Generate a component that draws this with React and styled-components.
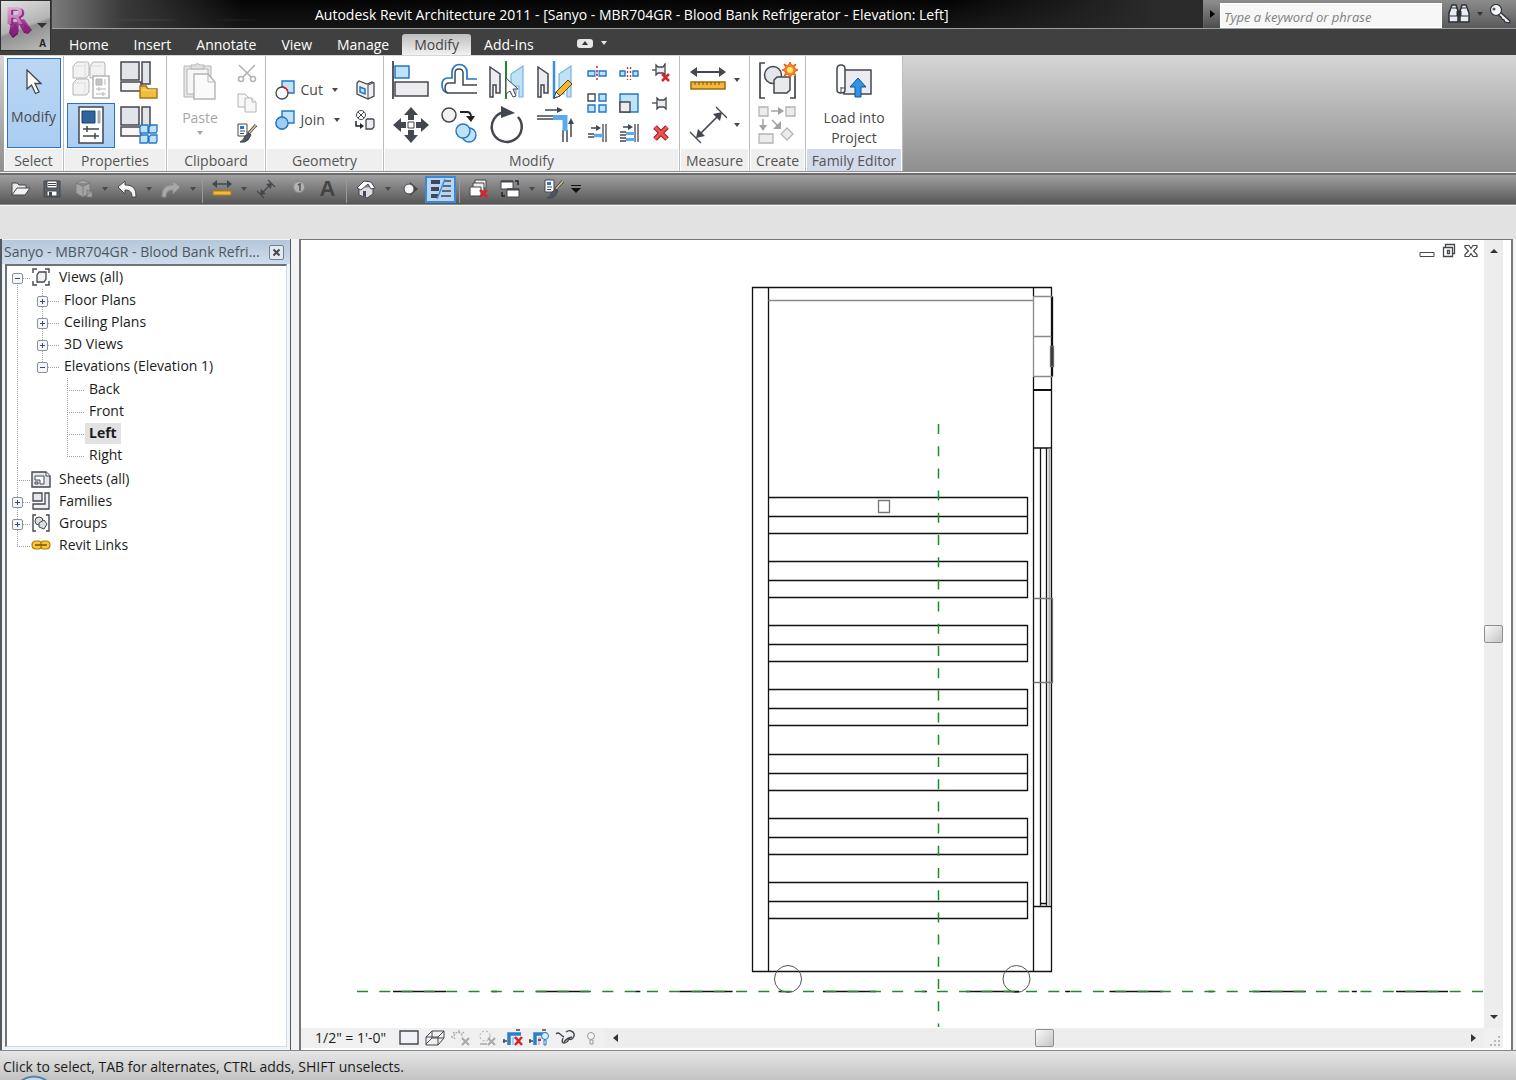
import React, { useState } from 'react';
import styled, { createGlobalStyle, css } from 'styled-components';

const INK = '#43474f';
const BLUE = '#2277c8';
const PALE = '#bfe2f7';
const DIM = '#b4b4b4';
const GREEN = '#1f8a2b';

const GlobalStyle = createGlobalStyle`
    * { box-sizing: border-box; }
    body {
        margin: 0;
        font-family: "Open Sans", "Noto Sans", sans-serif;
        font-size: 14px;
        line-height: 20px;
        color: #1c1c1c;
    }
    button, input { font: inherit; color: inherit; }
    button { background: none; border: 0; padding: 0; }
    ul { list-style: none; margin: 0; padding: 0; }
    svg { display: block; flex: none; }
`;

/* ---------- icons ---------- */

const Glyph = ({ w = 20, h = w, children, ...rest }) => (
    <svg width={w} height={h} viewBox={`0 0 ${w} ${h}`} fill="none" stroke={INK} aria-hidden="true" {...rest}>
        {children}
    </svg>
);

const Caret = ({ color = '#4a4a4a', w = 6 }) => (
    <Glyph w={w} h={4} stroke="none"><path d={`M0 0h${w}L${w / 2} 4z`} fill={color} /></Glyph>
);

const LogoIcon = () => (
    <svg width="49" height="49" viewBox="0 0 49 49" aria-hidden="true">
        <defs>
            <linearGradient id="logoFace" x1="0" y1="0" x2="0" y2="1">
                <stop offset="0" stopColor="#e9c3e2" />
                <stop offset="1" stopColor="#b455a6" />
            </linearGradient>
            <linearGradient id="logoLeg" x1="0" y1="0" x2="0" y2="1">
                <stop offset="0" stopColor="#b845a6" />
                <stop offset="1" stopColor="#5e1056" />
            </linearGradient>
        </defs>
        <path d="M10 21h8l-1 12-5 4-4-5zM16 20l7-2 8 11-4 4-4-1z" fill="url(#logoLeg)" />
        <path d="M14 22l4 8-8 6zM22 21l8 8-4 3z" fill="#8a2380" />
        <text x="7" y="24" fontFamily="Liberation Sans, sans-serif" fontWeight="700" fontSize="24" fill="#8b2a7e">R</text>
        <text x="5" y="23" fontFamily="Liberation Sans, sans-serif" fontWeight="700" fontSize="24" fill="url(#logoFace)">R</text>
        <path d="M36 22h10l-5 5z" fill="#333" />
        <text x="38" y="46" fontFamily="Liberation Sans, sans-serif" fontWeight="700" fontSize="10" fill="#222">A</text>
    </svg>
);

const CursorIcon = () => (
    <Glyph w={16} h={26}>
        <path d="M1 1v19l4.500-4 4 8.500 3.500-1.500-4-8.500H15z" fill="#fff" strokeWidth="1.300" />
    </Glyph>
);

const TypePropertiesIcon = () => (
    <Glyph w={38} stroke={DIM} fill="#f2f2f2">
        <path d="M5 1h11l1 3v10l-3 3H1V5zM21 1h11l1 3v10l-3 3H18V5zM5 18h11l1 3v10l-3 3H1V22z" />
        <path d="M1 5h12l3-4M13 5v12M18 5h12M1 22h12v12" stroke="#dcdcdc" />
        <path d="M21 15h16v22H21z" fill="#fff" strokeWidth="1.500" />
        <path d="M24 18h6v6h-6z" fill="#c4c4c4" />
        <path d="M33 18v6M24 28h10M24 33h10M27 26v4M31 31v4" />
    </Glyph>
);

const FamilyFrame = () => (
    <g strokeWidth="1.500">
        <path d="M1 1h18v18H1z" fill="#e3e3ea" />
        <path d="M1 21h20v9H1z" fill="#f6f6f6" />
        <path d="M22 1h8v22h-8z" fill="#e3e3ea" />
    </g>
);

const CategoryIcon = () => (
    <Glyph w={38}>
        <FamilyFrame />
        <path d="M20 37V25h6l2 3h9v9z" fill="#f5bd3f" stroke="#a8730c" strokeWidth="1.400" />
        <path d="M22 29h14" stroke="#fde29a" />
    </Glyph>
);

const TypesIcon = () => (
    <Glyph w={38}>
        <FamilyFrame />
        <path d="M21 19h7v8h-8v-6zM31 19h6v6l-1 2h-7v-6zM21 29h7v6l-1 2h-7v-6zM31 29h6v6l-1 2h-7v-6z" fill={PALE} stroke={BLUE} strokeWidth="1.300" />
    </Glyph>
);

const PropertiesIcon = () => (
    <Glyph w={26} h={38}>
        <path d="M1 1h24v36H1z" fill="#fff" strokeWidth="1.500" />
        <path d="M4 5h13v12H4z" fill="#2f649c" stroke="#17406e" />
        <path d="M20 5h2v12h-2z" fill="#b8bcc4" stroke="#9aa0aa" />
        <path d="M5 23h16M9 20v6M5 30h16M17 27v6" strokeWidth="1.500" />
    </Glyph>
);

const PasteIcon = () => (
    <Glyph w={34} h={38} stroke={DIM}>
        <path d="M1 4h27v31H1z" fill="#e6e6e6" />
        <path d="M4 7h21v25H4z" fill="#f6f6f6" />
        <path d="M8 3h4q2-3 5 0h4v4H8z" fill="#e0e0e0" />
        <path d="M11 12h14l7 8v17H11z" fill="#fafafa" strokeWidth="1.400" />
        <path d="M25 12v8h7" />
    </Glyph>
);

const ScissorsIcon = () => (
    <Glyph stroke={DIM} strokeWidth="1.600">
        <path d="M2 2l12 12M18 2L6 14" />
        <circle cx="4" cy="16" r="2.500" /><circle cx="16" cy="16" r="2.500" />
    </Glyph>
);

const CopyClipIcon = () => (
    <Glyph h={22} stroke={DIM} fill="#f7f7f7">
        <path d="M1 2h7l4 4v9H1z" /><path d="M8 6h7l4 4v10H8z" /><path d="M15 6v4h4" />
    </Glyph>
);

const MatchIcon = () => (
    <Glyph>
        <path d="M1 1h9v12H1z" fill="#fff" /><path d="M3 3h4v3H3z" fill={BLUE} stroke="none" />
        <path d="M3 8h5M3 10.500h4" />
        <path d="M19 2l-8 9" strokeWidth="3" /><path d="M19 2l-7 8" stroke="#d9c08a" strokeWidth="1.500" />
        <path d="M12 10l2 2-3 5q-3 3-8 2 4-2 5-6z" fill="#4d5560" />
    </Glyph>
);

const CutGeoIcon = () => (
    <Glyph w={22}>
        <path d="M8 2h12v12H8z" fill={PALE} stroke={BLUE} strokeWidth="1.400" />
        <circle cx="8" cy="14" r="6" fill="#fff" strokeWidth="1.300" />
        <path d="M8 8a6 6 0 0 1 6 6" stroke="#e02020" strokeWidth="1.500" />
    </Glyph>
);

const JoinGeoIcon = () => (
    <Glyph w={22} stroke={BLUE}>
        <path d="M8 14V2h12v12h-6a6 6 0 1 1-6-6" fill={PALE} strokeWidth="1.400" />
        <circle cx="8" cy="14" r="6" fill="#9fcdf0" strokeWidth="1.300" />
    </Glyph>
);

const WallFaceIcon = () => (
    <Glyph>
        <path d="M2 3l2-2 8 3 5-2 2 1v13l-6 3L2 14z" fill="#f0f0f3" strokeWidth="1.300" />
        <path d="M13 5v14M13 5l5-2" /><path d="M5 7l5 2v5l-5-2z" fill={PALE} stroke={BLUE} strokeWidth="1.500" />
    </Glyph>
);

const PaintIcon = () => (
    <Glyph>
        <circle cx="6" cy="5" r="4.500" fill="#fff" /><path d="M3 2l6 6M9 2L3 8" />
        <path d="M1 11v5h5" stroke="#222" strokeWidth="1.500" /><path d="M5 13l4 3-4 3z" fill="#222" stroke="none" />
        <path d="M12 9h6l1 1v7l-2 2h-6v-9z" fill="#ececf0" strokeWidth="1.300" />
    </Glyph>
);

const AlignIcon = () => (
    <Glyph w={38}>
        <path d="M1 0v38" stroke="#222" strokeWidth="1.500" />
        <path d="M3 5h14v12H3z" fill={PALE} stroke={BLUE} strokeWidth="1.500" />
        <path d="M3 21h33v14H3z" fill="#ececf0" strokeWidth="1.500" />
    </Glyph>
);

const OffsetIcon = () => (
    <Glyph w={38}>
        <path d="M37 18H27V11a7 7 0 0 0-15 0v6H8q-6 0-6 7t6 8" stroke={BLUE} strokeWidth="1.700" />
        <path d="M37 24H23V12q0-4-4-4t-4 4v10H9q-4 0-4 5t4 5h28" strokeWidth="1.500" />
    </Glyph>
);

const MirrorPickIcon = () => (
    <Glyph w={38}>
        <path d="M2 6l10 7v19H8V24H5v12H2z" fill="#ececf0" strokeWidth="1.500" />
        <path d="M35 5L23 13v20h5V25h3v11h4z" fill={PALE} stroke="#79b3dc" strokeWidth="1.200" />
        <path d="M18 0v38" stroke={GREEN} strokeWidth="2" />
        <path d="M18 17v16l4-3 3 6 3-1-3-7h5z" fill="#fff" />
    </Glyph>
);

const MirrorDrawIcon = () => (
    <Glyph w={38}>
        <path d="M2 6l10 7v19H8V24H5v12H2z" fill="#ececf0" strokeWidth="1.500" />
        <path d="M35 5L23 13v20h5V25h3v11h4z" fill={PALE} stroke="#79b3dc" strokeWidth="1.200" />
        <path d="M18 0v38" stroke="#3e8ede" strokeWidth="2.500" />
        <path d="M32 19l4 4-12 12-6 2 2-6z" fill="#f6b62e" stroke="#54431b" />
        <path d="M20 31l4 4-6 2z" fill="#fff" />
    </Glyph>
);

const MoveIcon = () => (
    <Glyph w={38}>
        <path d="M19 1l7 8h-4v5h-6V9h-4zM19 37l7-8h-4v-5h-6v5h-4zM1 19l8-7v4h5v6H9v4zM37 19l-8-7v4h-5v6h5v4z" fill={INK} stroke="none" />
        <path d="M16 16h6v6h-6z" fill="#fff" />
    </Glyph>
);

const CopyIcon = () => (
    <Glyph w={38}>
        <circle cx="9" cy="9" r="7" fill="#f2f2f2" strokeWidth="1.500" />
        <path d="M20 6h7q4 0 4 5" stroke="#222" strokeWidth="1.800" /><path d="M26 10h9l-4 6z" fill="#222" stroke="none" />
        <circle cx="29" cy="29" r="7" fill={PALE} stroke={BLUE} strokeWidth="1.400" />
        <circle cx="23" cy="25" r="7" fill={PALE} stroke={BLUE} strokeWidth="1.400" />
    </Glyph>
);

const RotateIcon = () => (
    <Glyph w={38}>
        <path d="M30 11a15 15 0 1 1-13-5" strokeWidth="2.500" />
        <path d="M13 0l14 7-14 5z" fill={INK} stroke="none" />
    </Glyph>
);

const TrimIcon = () => (
    <Glyph w={38}>
        <path d="M1 10h17M1 13h17M27 24v12M31 24v12" strokeWidth="1.500" />
        <path d="M17 11.500h12V25" stroke="#5aaaf0" strokeWidth="5" />
        <path d="M9 4h14M35 31V16" strokeWidth="1.500" />
        <path d="M21 1l6 3-6 3zM32 18l3-6 3 6z" fill={INK} stroke="none" />
    </Glyph>
);

const SplitIcon = () => (
    <Glyph>
        <path d="M1 8h7v5H1zM12 8h7v5h-7z" fill={PALE} stroke={BLUE} strokeWidth="1.400" />
        <path d="M8 8h4v5H8z" fill="#9fd1f5" stroke="none" />
        <path d="M10 3v15" stroke="#d12a2a" strokeWidth="1.500" strokeDasharray="2 2" />
    </Glyph>
);

const SplitGapIcon = () => (
    <Glyph>
        <path d="M1 8h5v5H1zM14 8h5v5h-5z" fill={PALE} stroke={BLUE} strokeWidth="1.400" />
        <path d="M8.500 4v13M11.500 4v13" stroke="#d12a2a" strokeWidth="1.300" strokeDasharray="2 2" />
    </Glyph>
);

const UnpinIcon = () => (
    <Glyph>
        <path d="M1 7h4" strokeWidth="1.300" /><path d="M5 2l2 2h5l2-3v11l-2-2H7l-2 2z" fill="#ececf0" strokeWidth="1.300" />
        <path d="M11 11l7 7M18 11l-7 7" stroke="#d3262b" strokeWidth="2.500" />
    </Glyph>
);

const PinIcon = () => (
    <Glyph>
        <path d="M1 10h5" strokeWidth="1.300" /><path d="M6 5l2 2h5l2-2v11l-2-2H8l-2 2z" fill="#ececf0" strokeWidth="1.300" />
    </Glyph>
);

const ArrayIcon = () => (
    <Glyph w={22}>
        <path d="M2 2h7v7H2z" fill="#fff" strokeWidth="1.400" />
        <path d="M13 2h7v7h-7zM2 13h7v7H2zM13 13h7v7h-7z" fill={PALE} stroke={BLUE} strokeWidth="1.400" />
    </Glyph>
);

const ScaleIcon = () => (
    <Glyph w={22}>
        <path d="M2 2h18v18H2z" fill={PALE} stroke={BLUE} strokeWidth="1.400" />
        <path d="M2 10h10v10H2z" fill="#ececf0" strokeWidth="1.400" />
    </Glyph>
);

const ExtendOneIcon = () => (
    <Glyph>
        <path d="M19 1v18M16 1v18M1 11h6M1 14h6M4 5h6" strokeWidth="1.300" />
        <path d="M9 2l5 3-5 3z" fill={INK} stroke="none" />
        <path d="M7 12.500h9" stroke="#5aaaf0" strokeWidth="3.500" />
    </Glyph>
);

const ExtendManyIcon = () => (
    <Glyph>
        <path d="M19 1v18M16 1v18M1 9h6M1 12h6M1 15h6M1 18h6M4 4h6" strokeWidth="1.300" />
        <path d="M9 1l5 3-5 3z" fill={INK} stroke="none" />
        <path d="M7 10.500h9M7 16.500h9" stroke="#5aaaf0" strokeWidth="3" />
    </Glyph>
);

const DeleteIcon = () => (
    <Glyph w={18}>
        <path d="M3 3l12 12M15 3L3 15" stroke="#8f1f20" strokeWidth="5" />
        <path d="M3 3l12 12M15 3L3 15" stroke="#ee5252" strokeWidth="3" />
    </Glyph>
);

const RulerIcon = () => (
    <Glyph w={38} h={30}>
        <path d="M4 7h30" strokeWidth="2" /><path d="M8 2L1 7l7 5zM30 2l7 5-7 5z" fill={INK} stroke="none" />
        <path d="M2 17h34v7H2z" fill="#f5b83c" stroke="#996c10" strokeWidth="1.500" />
        <path d="M6 17v3M10 17v3M14 17v3M18 17v3M22 17v3M26 17v3M30 17v3" stroke="#7d5608" />
    </Glyph>
);

const AlignedDimIcon = () => (
    <Glyph w={38}>
        <path d="M9 30L31 8" strokeWidth="1.700" /><path d="M7 32l2-9 7 7zM33 6l-9 2 7 7z" fill={INK} stroke="none" />
        <path d="M1 26l11 11M27 1l11 11" strokeWidth="1.400" />
    </Glyph>
);

const CreateGroupIcon = () => (
    <Glyph w={40}>
        <path d="M7 3H2v35h5M32 38h5V16" strokeWidth="1.700" />
        <circle cx="15" cy="15" r="8.500" fill="#e4e6ec" strokeWidth="1.500" />
        <path d="M19 17h13v13l-3 3H16V20z" fill="#e9e9ee" strokeWidth="1.500" />
        <path d="M32 2l2 4 4-2-2 4 4 2-4 2 2 4-4-2-2 4-2-4-4 2 2-4-4-2 4-2-2-4 4 2z" fill="#f68a1e" stroke="#d8480e" strokeWidth="0.800" />
        <circle cx="32" cy="10" r="3" fill="#ffe36b" stroke="none" />
    </Glyph>
);

const CreateSimilarIcon = () => (
    <Glyph w={40} stroke={DIM} fill="#ececec">
        <path d="M1 2h9v9H1zM28 2h9v9h-9zM1 29h14v9H1zM29 23l6 6-6 6-6-6z" strokeWidth="1.300" />
        <path d="M13 6h9M5 14v8M14 15l6 6" stroke="#a2a2a2" strokeWidth="1.500" />
        <path d="M20 2l6 4-6 4zM1 20l4 6 4-6zM23 16v8h-8z" fill="#a2a2a2" stroke="none" />
    </Glyph>
);

const LoadIcon = () => (
    <Glyph w={38} h={34}>
        <path d="M9 6h27v24H9z" fill="#ececf0" strokeWidth="1.500" />
        <path d="M2 5q0-4 4-4t4 4v21q0 3-4 3t-4-3z" fill="#fafafa" strokeWidth="1.500" />
        <path d="M6 23v6M6 24h4" />
        <path d="M23 14l8 9h-5v10h-6V23h-5z" fill="#2f93ea" stroke="#15508f" />
    </Glyph>
);

const OpenIcon = () => (
    <Glyph><path d="M1 16V4h5l2 2h7v3" fill="#e8e8e8" /><path d="M1 16L6 9h13l-5 7z" fill="#f3f3f3" /></Glyph>
);
const SaveIcon = () => (
    <Glyph>
        <path d="M2 2h16v16H2z" fill="#5b6069" /><path d="M5 2h10v7H5z" fill="#fff" /><path d="M6 4.500h8M6 6.500h8" />
        <path d="M5 12h10v5H5z" fill="#fff" /><path d="M7 13h3v4H7z" fill={INK} stroke="none" />
    </Glyph>
);
const CubesIcon = () => (
    <Glyph stroke="#7c7c7c" fill="#a5a5a5"><path d="M10 1l7 3v10l-7 4-7-4V4zM3 4l7 3 7-3M10 7v11M14 11l5 2v5h-5z" /></Glyph>
);
const UndoIcon = () => (
    <Glyph><path d="M1 8l7-6v4c8 0 11 3 11 12h-4c0-5-2-7-7-7v4z" fill="#f5f5f5" /></Glyph>
);
const RedoIcon = () => (
    <Glyph stroke="#8c8c8c"><path d="M19 8l-7-6v4C4 6 1 9 1 18h4c0-5 2-7 7-7v4z" fill="#a8a8a8" /></Glyph>
);
const SmallRulerIcon = () => (
    <Glyph>
        <path d="M2 5h16" strokeWidth="1.500" /><path d="M5 1L0 5l5 4zM15 1l5 4-5 4z" fill={INK} stroke="none" />
        <path d="M1 12h18v4H1z" fill="#f5b83c" stroke="#b57b0a" />
    </Glyph>
);
const SmallDimIcon = () => (
    <Glyph><path d="M5 15L15 5M1 12l7 7M12 1l7 7" strokeWidth="1.300" /><path d="M4 16l1-6 5 5zM16 4l-6 1 5 5z" fill={INK} stroke="none" /></Glyph>
);
const TagIcon = () => (
    <Glyph>
        <path d="M2 18v-4h6" stroke="#777" strokeDasharray="2 1" /><circle cx="12" cy="8" r="5.500" fill="#b3b3b3" stroke="#8a8a8a" />
        <path d="M11 6l2-1v7" stroke="#555" strokeWidth="1.500" />
    </Glyph>
);
const HouseIcon = () => (
    <Glyph>
        <path d="M3 9v7l8 3 6-4V8" fill="#dcdde2" /><path d="M1 9l7-7 7 1 4 6-4 1-3-5-7 6z" fill="#fff" />
        <path d="M7 12h3v6l-3-1z" fill={INK} stroke="none" />
    </Glyph>
);
const SectionIcon = () => (
    <Glyph><path d="M10 3l8 7-8 7z" fill={INK} stroke="none" /><circle cx="9" cy="10" r="5" fill="#f4f4f4" /></Glyph>
);
const ThinLinesIcon = () => (
    <Glyph w={22}>
        <path d="M1 4h9M1 11h8M1 18h7" strokeWidth="4" /><path d="M14 3h7M13 8h8M12 13h9M11 18h10" strokeWidth="1.300" />
        <path d="M15 1L7 21" stroke="#3e8ede" strokeWidth="1.500" />
    </Glyph>
);
const CloseHiddenIcon = () => (
    <Glyph>
        <path d="M6 1h11v8H6z" fill="#eee" /><path d="M4 4h11v8H4z" fill="#eee" /><path d="M1 8h11v9H1z" fill="#fff" />
        <path d="M11 11l7 7M18 11l-7 7" stroke="#d3262b" strokeWidth="2.500" />
    </Glyph>
);
const SwitchIcon = () => (
    <Glyph>
        <path d="M1 2h12v8H1z" fill="#fff" /><path d="M1 2h12v1H1z" fill={INK} /><path d="M7 10h12v8H7z" fill="#fff" />
        <path d="M7 10h12v1H7z" fill={INK} /><path d="M15 2h3v4M2 13v4h3" stroke="#222" strokeWidth="1.400" />
    </Glyph>
);
const BinocularsIcon = () => (
    <Glyph w={22} h={20} stroke="#2b2f36">
        <path d="M4 1h4l2 6v11H1V9zM18 1h-4l-2 6v11h9V9z" fill="#e9ecf2" strokeWidth="1.500" />
        <path d="M9 7h4v5H9z" fill="#333" /><path d="M2 12h7M13 12h7M4 4h5M13 4h5" />
    </Glyph>
);
const KeyIcon = () => (
    <Glyph w={22} h={20} stroke="#2b2f36">
        <path d="M10 7l11 10-1 2-4-1-1-2-2-1-1-2-4-3z" fill="#e9ecf2" strokeWidth="1.200" />
        <circle cx="7" cy="6" r="5.500" fill="#f4f6fa" strokeWidth="1.200" /><circle cx="5" cy="5" r="1.500" fill="#555" stroke="none" />
    </Glyph>
);

const ViewsIcon = () => (
    <Glyph>
        <path d="M6 2H2v4M14 2h4v4M2 14v4h4M18 14v4h-4" strokeWidth="1.400" />
        <path d="M8 5h7v7l-2 3H6V8z" fill="#f2f2f4" strokeWidth="1.300" />
    </Glyph>
);
const SheetsIcon = () => (
    <Glyph>
        <path d="M1 3h14l4 4v11H1z" fill="#e4e7ee" strokeWidth="1.400" /><path d="M4 7h9v8h-4v-4H4zM15 3v4h4" fill="#fff" />
        <path d="M4 13h3v2H4z" />
    </Glyph>
);
const FamiliesIcon = () => (
    <Glyph>
        <path d="M2 2h9v8H2z" fill="#e4e7ee" strokeWidth="1.300" /><path d="M14 2h4v16H2v-5h12z" fill="#f0f0f4" strokeWidth="1.300" />
    </Glyph>
);
const GroupsIcon = () => (
    <Glyph>
        <path d="M5 2H2v16h3M15 2h3v16h-3" strokeWidth="1.400" /><circle cx="8" cy="8" r="4" fill="#d8dde6" />
        <path d="M8 10l5-3 3 4-3 5-5-2z" fill="#d8dde6" />
    </Glyph>
);
const LinkIcon = () => (
    <Glyph stroke="#b27a05" strokeWidth="1.200">
        <path d="M5 6h3q2 0 2 4t-2 4H5q-4 0-4-4t4-4zM12 6h3q4 0 4 4t-4 4h-3q-2 0-2-4t2-4z" fill="#f7c83a" />
        <path d="M4 10h4M12 10h4M8 10h4" stroke="#7b5302" strokeWidth="1.500" />
    </Glyph>
);

const DetailIcon = () => <Glyph h={16}><path d="M1 1h18v13H1z" fill="#f0f2f5" strokeWidth="1.400" /></Glyph>;
const StyleIcon = () => (
    <Glyph h={16}><path d="M1 7h12v8H1zM1 7l6-6h12v7l-6 7M13 7l6-6M7 1v7h12M7 8l-6 6" /></Glyph>
);
const SunIcon = () => (
    <Glyph h={18} stroke="#a9a9a9">
        <path d="M8 1v3M2 3l2 2M13 3l-2 2M0 8h3M4 10a4 4 0 1 1 7-2" strokeDasharray="2 1" strokeWidth="1.300" />
        <path d="M11 9l7 7M18 9l-7 7" strokeWidth="2" />
    </Glyph>
);
const ShadowIcon = () => (
    <Glyph h={18} stroke="#a9a9a9">
        <circle cx="8" cy="7" r="5" strokeDasharray="2 2" /><path d="M3 15h7" strokeWidth="1.500" /><path d="M11 9l7 7M18 9l-7 7" strokeWidth="2" />
    </Glyph>
);
const CropFrame = () => (
    <>
        <path d="M0 12h4M13 1h4M1 10v4" strokeWidth="1.500" />
        <path d="M6 16V5h12" stroke="#2b7fd0" strokeWidth="3.500" />
        <path d="M10 16V9h5" stroke="#8cc3ee" strokeWidth="1.500" />
    </>
);
const CropIcon = () => (
    <Glyph h={18}><CropFrame /><path d="M12 8l7 8M19 8l-7 8" stroke="#d3262b" strokeWidth="2.500" /></Glyph>
);
const CropRegionIcon = () => (
    <Glyph h={18}>
        <CropFrame /><path d="M9 11h3" stroke="#d3262b" strokeWidth="2" />
        <circle cx="16" cy="7" r="3.500" fill="#dff0fb" stroke={BLUE} /><path d="M15 11h2v5h-2z" fill="#fff" stroke={BLUE} />
    </Glyph>
);
const GlassesIcon = () => (
    <Glyph h={16}>
        <path d="M1 4q2-2 4 0t4 3M9 12q3-4 8-5M11 2q3-2 5-1" strokeWidth="1.400" />
        <path d="M8 8q-2 5 1 5t5-4M14 8q1 3 4 0 3-5-2-7" strokeWidth="1.400" />
    </Glyph>
);
const BulbIcon = () => (
    <Glyph h={16} stroke="#9c9c9c"><circle cx="10" cy="6" r="3.500" fill="#f3f3f3" /><path d="M9 10h3v4H9z" /></Glyph>
);

/* ---------- frame ---------- */

const Shell = styled.div`
    display: flex;
    flex-direction: column;
    min-height: 100vh;
    overflow: hidden;
    background: #e2e2e2;
`;

const Header = styled.header`
    display: grid;
    grid-template-columns: 52px 1fr;
    grid-template-rows: 29px 26px;
    background: #404040;
`;

const AppButton = styled.button`
    display: grid;
    place-items: center;
    grid-row: 1 / 3;
    width: 51px;
    height: 51px;
    border: 1px solid #2e2e2e;
    background: linear-gradient(160deg, #e2e2e2, #b4b4b4 50%, #8f8f8f 55%, #bdbdbd);
`;

const TitleBar = styled.div`
    display: flex;
    border-bottom: 1px solid #9aa09d;
    background:
        radial-gradient(ellipse at 92px 20px, #4c5052, transparent 50px),
        radial-gradient(ellipse at 184px 20px, #3c3c3c, transparent 40px),
        linear-gradient(90deg, #7c7c7c, #3a3a3a 70px, transparent 190px),
        linear-gradient(90deg, transparent 900px, #2a2a2a 1100px),
        linear-gradient(#050505, #161616);
`;

const Title = styled.h1`
    flex: 1;
    margin: 0;
    padding-left: 263px;
    font-size: 14px;
    line-height: 30px;
    font-weight: 400;
    color: #fff;
    white-space: nowrap;
`;

const InfoCenter = styled.form`
    display: flex;
    align-items: center;
    width: 313px;
    padding-left: 1px;
    background: linear-gradient(#8c8c8c, #5a5a5a);
`;

const InfoToggle = styled.button`
    display: grid;
    place-items: center;
    width: 16px;
    height: 27px;
    background: linear-gradient(#8e8e8e, #4c4c4c);
`;

const Search = styled.input`
    width: 222px;
    height: 25px;
    margin-top: 2px;
    padding: 4px 3px 0;
    border: 1px solid #fff;
    background: #f7f7f7;
    font-size: 13px;
    font-style: italic;
    &::placeholder { color: #808080; opacity: 1; }
`;

const InfoButton = styled.button`
    display: grid;
    place-items: center;
    width: ${(p) => p.$w || 34}px;
`;

const TabBar = styled.nav`
    display: flex;
    align-items: flex-end;
    gap: 1px;
    padding-left: 5px;
`;

const Tab = styled.button`
    height: 21px;
    padding: 0 12px;
    line-height: 20px;
    color: #fff;
    ${(p) => p.$active && css`
        border-radius: 3px 3px 0 0;
        background: linear-gradient(#bdbdbd, #f2f2f2);
        color: #444;
    `}
`;

const TabTools = styled.div`
    display: flex;
    align-items: center;
    gap: 8px;
    height: 24px;
    padding-left: 30px;
`;

const Pill = styled.button`
    display: grid;
    place-items: center;
    width: 16px;
    height: 9px;
    border-radius: 3px;
    background: #e6e6e6;
`;

/* ---------- ribbon ---------- */

const Ribbon = styled.div`
    display: flex;
    height: 118px;
    padding: 1px 0 1px 4px;
    background: linear-gradient(#d6d6d6, #8e8e8e);
    border-bottom: 1px solid #f4f4f4;
`;

const PanelBox = styled.section`
    display: flex;
    flex-direction: column;
    flex: none;
    width: ${(p) => p.$w}px;
    border-right: 1px solid #bdbdbd;
    background: #fff;
`;

const PanelBody = styled.div`
    flex: 1;
    display: flex;
    align-items: center;
    justify-content: center;
    gap: ${(p) => p.$gap || 0}px;
    padding: ${(p) => p.$pad || 0};
`;

const PanelCaption = styled.h2`
    margin: 0 1px;
    height: 22px;
    font-size: 14px;
    font-weight: 400;
    line-height: 24px;
    text-align: center;
    white-space: nowrap;
    color: #555;
    background: ${(p) => (p.$accent ? '#d3dae9' : '#efefef')};
`;

const pressed = css`
    border: 1px solid #2a70c4;
    background: linear-gradient(#bcd7f3, #a9cdf2);
`;

const BigButton = styled.button`
    display: flex;
    flex-direction: column;
    align-items: center;
    width: ${(p) => p.$w}px;
    height: 90px;
    padding-top: ${(p) => p.$top || 4}px;
    color: ${(p) => (p.disabled ? '#a6a6a6' : '#4a4a4a')};
    ${(p) => p.$pressed && pressed}
    svg + span { margin-top: auto; }
`;

const BigLabel = styled.span`
    display: flex;
    flex-direction: column;
    align-items: center;
    height: 40px;
    line-height: 20px;
`;

const CaretSlot = styled.span`
    display: grid;
    place-items: center;
    height: 10px;
`;

const IconGrid = styled.div`
    display: grid;
    grid-template-columns: repeat(${(p) => p.$cols}, ${(p) => p.$cell}px);
    grid-auto-rows: ${(p) => p.$row || 45}px;
`;

const ToolButton = styled.button`
    display: grid;
    place-items: center;
    ${(p) => p.$pressed && pressed}
`;

const TextTool = styled.button`
    display: flex;
    align-items: center;
    gap: 5px;
    color: #4a4a4a;
    > :last-child { margin-left: 4px; }
`;

const MeasureRow = styled.button`
    display: flex;
    align-items: center;
    gap: 7px;
    height: 45px;
`;

const Panel = ({ title, w, accent, gap, pad, children }) => (
    <PanelBox $w={w} aria-label={title}>
        <PanelBody $gap={gap} $pad={pad}>{children}</PanelBody>
        <PanelCaption $accent={accent}>{title}</PanelCaption>
    </PanelBox>
);

const Tools = ({ items, cols, cell, row }) => (
    <IconGrid $cols={cols} $cell={cell} $row={row}>
        {items.map(([name, Icon, on]) => (
            <ToolButton key={name} aria-label={name} $pressed={on}><Icon /></ToolButton>
        ))}
    </IconGrid>
);

const propertyTools = [
    ['Type Properties', TypePropertiesIcon],
    ['Family Category', CategoryIcon],
    ['Properties Palette', PropertiesIcon, true],
    ['Family Types', TypesIcon],
];

const clipboardTools = [
    ['Cut to Clipboard', ScissorsIcon],
    ['Copy to Clipboard', CopyClipIcon],
    ['Match Type', MatchIcon],
];

const modifyTools = [
    ['Align', AlignIcon],
    ['Offset', OffsetIcon],
    ['Mirror - Pick Axis', MirrorPickIcon],
    ['Mirror - Draw Axis', MirrorDrawIcon],
    ['Move', MoveIcon],
    ['Copy', CopyIcon],
    ['Rotate', RotateIcon],
    ['Trim/Extend to Corner', TrimIcon],
];

const smallModifyTools = [
    ['Split Element', SplitIcon],
    ['Split with Gap', SplitGapIcon],
    ['Unpin', UnpinIcon],
    ['Array', ArrayIcon],
    ['Scale', ScaleIcon],
    ['Pin', PinIcon],
    ['Extend Single', ExtendOneIcon],
    ['Extend Multiple', ExtendManyIcon],
    ['Delete', DeleteIcon],
];

const RibbonBar = () => (
    <Ribbon>
        <Panel title="Select" w={60}>
            <BigButton $w={54} $top={10} $pressed>
                <CursorIcon />
                <BigLabel>Modify</BigLabel>
            </BigButton>
        </Panel>
        <Panel title="Properties" w={103}>
            <Tools items={propertyTools} cols={2} cell={48} />
        </Panel>
        <Panel title="Clipboard" w={99} gap={12} pad="0 0 0 6px">
            <BigButton $w={44} disabled>
                <PasteIcon />
                <BigLabel>Paste<CaretSlot><Caret color="#a6a6a6" /></CaretSlot></BigLabel>
            </BigButton>
            <Tools items={clipboardTools} cols={1} cell={26} row={30} />
        </Panel>
        <Panel title="Geometry" w={118} gap={10} pad="4px 0 0">
            <IconGrid $cols={1} $cell={70} $row={30}>
                <TextTool><CutGeoIcon />Cut<Caret /></TextTool>
                <TextTool><JoinGeoIcon />Join<Caret /></TextTool>
            </IconGrid>
            <Tools items={[['Wall Opening', WallFaceIcon], ['Split Face', PaintIcon]]} cols={1} cell={22} row={30} />
        </Panel>
        <Panel title="Modify" w={296} gap={2}>
            <Tools items={modifyTools} cols={4} cell={48} />
            <Tools items={smallModifyTools} cols={3} cell={32} row={30} />
        </Panel>
        <Panel title="Measure" w={70}>
            <div>
                <MeasureRow aria-label="Measure between references"><RulerIcon /><Caret /></MeasureRow>
                <MeasureRow aria-label="Aligned dimension"><AlignedDimIcon /><Caret /></MeasureRow>
            </div>
        </Panel>
        <Panel title="Create" w={56}>
            <Tools items={[['Create Group', CreateGroupIcon], ['Create Similar', CreateSimilarIcon]]} cols={1} cell={44} />
        </Panel>
        <Panel title="Family Editor" w={97} accent>
            <BigButton $w={90} $top={6}>
                <LoadIcon />
                <BigLabel><span>Load into</span><span>Project</span></BigLabel>
            </BigButton>
        </Panel>
    </Ribbon>
);

/* ---------- quick access toolbar ---------- */

const QuickBar = styled.div`
    display: flex;
    align-items: center;
    height: 32px;
    padding: 1px 0 2px 5px;
    background: linear-gradient(#a0a0a0, #565656);
    border-top: 2px solid #6c6c6c;
    border-bottom: 1px solid #8c8c8c;
`;

const QuickButton = styled.button`
    display: grid;
    place-items: center;
    width: ${(p) => (p.$narrow ? 13 : 31)}px;
    height: 27px;
    ${(p) => p.$pressed && css`
        border: 2px solid #3f88d8;
        background: #b5d6f6;
    `}
`;

const QuickRule = styled.span`
    width: 1px;
    height: 27px;
    margin: 0 3px;
    background: #9a9a9a;
`;

const TextToolGlyph = styled.span`
    font-family: "Liberation Sans", sans-serif;
    font-size: 22px;
    font-weight: 700;
    color: #444;
`;

const OptionsBar = styled.div`
    height: 34px;
    border-top: 1px solid #f6f6f6;
    background: #e2e2e2;
`;

const quickItems = [
    ['Open', OpenIcon], ['Save', SaveIcon], ['Sync', CubesIcon], ['caret'],
    ['Undo', UndoIcon], ['caret'], ['Redo', RedoIcon], ['caret'], ['rule'],
    ['Measure', SmallRulerIcon], ['caret'], ['Dimension', SmallDimIcon], ['Tag', TagIcon],
    ['Text', () => <TextToolGlyph>A</TextToolGlyph>], ['rule'],
    ['3D View', HouseIcon], ['caret'], ['Section', SectionIcon], ['Thin Lines', ThinLinesIcon, true], ['rule'],
    ['Close Hidden Windows', CloseHiddenIcon], ['Switch Windows', SwitchIcon], ['caret'], ['Match Type', MatchIcon],
];

const QuickAccess = () => (
    <QuickBar role="toolbar" aria-label="Quick access">
        {quickItems.map(([name, Icon, on], i) => {
            if (name === 'rule') return <QuickRule key={i} />;
            if (name === 'caret') return <QuickButton key={i} $narrow aria-label="More"><Caret color="#4a4a4a" /></QuickButton>;
            return <QuickButton key={i} aria-label={name} $pressed={on}><Icon /></QuickButton>;
        })}
        <QuickButton $narrow aria-label="Customize">
            <Glyph w={10} h={8} stroke="none"><path d="M0 0h10v1H0zM0 3h10L5 8z" fill="#111" /></Glyph>
        </QuickButton>
    </QuickBar>
);

/* ---------- project browser ---------- */

const Main = styled.main`
    flex: 1;
    display: grid;
    grid-template-columns: 291px 1fr;
    column-gap: 8px;
    background: #f3f3f3;
    border-bottom: 1px solid #85898d;
`;

const Browser = styled.aside`
    display: flex;
    flex-direction: column;
    padding: 1px 3px 3px;
    border-left: 2px solid #55595e;
    border-right: 1px solid #55595e;
    background: #f0f5fa;
`;

const BrowserHead = styled.div`
    display: flex;
    align-items: center;
    justify-content: space-between;
    height: 24px;
    margin: 0 -3px;
    padding: 0 6px 0 2px;
    background: linear-gradient(#b4c6d8, #cfdeee);
    color: #4f565e;
`;

const BrowserTitle = styled.h2`
    margin: 0;
    width: 262px;
    font-size: 14px;
    font-weight: 400;
    overflow: hidden;
    white-space: nowrap;
`;

const CloseButton = styled.button`
    display: grid;
    place-items: center;
    width: 15px;
    height: 15px;
    border: 1px solid #74808c;
    border-radius: 2px;
    background: #e2ebf4;
`;

const dots = (dir) => `repeating-linear-gradient(${dir}, #a0a0a0 0 1px, transparent 1px 2px)`;

const TreePane = styled.div`
    flex: 1;
    border: solid #6e7378;
    border-width: 2px 1px 1px 2px;
    border-right-color: #d3dce6;
    border-bottom-color: #d3dce6;
    background: #fff;
`;

const Branch = styled.ul`
    padding: ${(p) => (p.$depth ? 1 : 0)}px 0;
`;

const Item = styled.li`
    background: ${dots('180deg')} ${(p) => 10 + p.$depth * 25}px 0 / 1px 100% no-repeat;
    &:last-child { background-size: 1px 12px; }
    ${(p) => !p.$depth && css`
        &:first-child { background-position-y: 13px; }
    `}
`;

const Row = styled.div`
    display: flex;
    align-items: center;
    height: 22px;
    padding-left: ${(p) => 5 + p.$depth * 25}px;
`;

const Twig = styled.span`
    display: flex;
    align-items: center;
    flex: none;
    width: ${(p) => (p.$depth ? 23 : 19)}px;
    height: 22px;
    padding-top: 3px;
    background: ${dots('90deg')} 5px 12px / 100% 1px no-repeat;
`;

const Expander = styled.button`
    display: grid;
    place-items: center;
    width: 11px;
    height: 11px;
    border: 1px solid #8b929b;
    border-radius: 2px;
    background: #f4f6f8;
`;

const NodeLabel = styled.span`
    padding: 0 4px 2px;
    line-height: 19px;
    white-space: nowrap;
    ${(p) => p.$current && css`
        background: #e2e2e2;
        font-weight: 700;
    `}
    svg + & { margin-left: 4px; }
`;

const views = [
    {
        name: 'Views (all)', Icon: ViewsIcon, children: [
            { name: 'Floor Plans', closed: true },
            { name: 'Ceiling Plans', closed: true },
            { name: '3D Views', closed: true },
            {
                name: 'Elevations (Elevation 1)', children: [
                    { name: 'Back' }, { name: 'Front' }, { name: 'Left', current: true }, { name: 'Right' },
                ],
            },
        ],
    },
    { name: 'Sheets (all)', Icon: SheetsIcon },
    { name: 'Families', Icon: FamiliesIcon, closed: true },
    { name: 'Groups', Icon: GroupsIcon, closed: true },
    { name: 'Revit Links', Icon: LinkIcon },
];

const Node = ({ node, depth }) => {
    const [open, setOpen] = useState(!node.closed);
    const { Icon } = node;
    return (
        <Item $depth={depth}>
            <Row $depth={depth}>
                <Twig $depth={depth}>
                    {(node.children || node.closed) && (
                        <Expander aria-label={`Toggle ${node.name}`} aria-expanded={open} onClick={() => setOpen(!open)}>
                            <Glyph w={7} stroke="#3b4a78"><path d={open ? 'M1 3.500h5' : 'M1 3.500h5M3.500 1v5'} /></Glyph>
                        </Expander>
                    )}
                </Twig>
                {Icon && <Icon />}
                <NodeLabel $current={node.current}>{node.name}</NodeLabel>
            </Row>
            {open && node.children && <Nodes nodes={node.children} depth={depth + 1} />}
        </Item>
    );
};

const Nodes = ({ nodes, depth }) => (
    <Branch $depth={depth}>
        {nodes.map((n) => <Node key={n.name} node={n} depth={depth} />)}
    </Branch>
);

/* ---------- drawing view ---------- */

const View = styled.section`
    display: grid;
    grid-template-columns: 1fr 19px;
    grid-template-rows: 1fr 20px;
    margin-right: 3px;
    padding: 0 8px 2px 0;
    border: solid #777;
    border-width: 1px 2px 0 2px;
    background: #fff;
`;

const Canvas = styled.div`
    position: relative;
    min-width: 0;
    > svg { width: 100%; height: 100%; }
`;

const WindowButtons = styled.div`
    position: absolute;
    top: 3px;
    right: 5px;
    display: flex;
    gap: 6px;
`;

const WindowButton = styled.button`
    display: grid;
    place-items: center;
    width: 16px;
    height: 16px;
`;

const ScrollBar = styled.div`
    display: flex;
    flex: 1;
    flex-direction: ${(p) => (p.$vertical ? 'column' : 'row')};
    align-items: center;
    justify-content: space-between;
    padding: ${(p) => (p.$vertical ? '2px 0' : '0 2px')};
    background: #ededed;
`;

const ScrollArrow = styled.button`
    display: grid;
    place-items: center;
    width: 18px;
    height: 18px;
`;

const Thumb = styled.div`
    width: 19px;
    height: 18px;
    border: 1px solid #8f8f8f;
    border-radius: 2px;
    background: linear-gradient(135deg, #fafafa, #c4c4c4);
`;

const ViewBar = styled.div`
    display: flex;
    align-items: center;
    background: #f0f0f0;
`;

const ScaleButton = styled.button`
    width: 95px;
    padding-left: 14px;
    text-align: left;
    white-space: nowrap;
`;

const ViewTool = styled.button`
    display: grid;
    place-items: center;
    width: 26px;
    height: 20px;
`;

const Grip = styled.div`
    display: grid;
    place-items: end;
    background: #f0f0f0;
`;

const shelves = [498, 562, 626, 690, 755, 819, 883];
const viewTools = [
    ['Detail Level', DetailIcon], ['Visual Style', StyleIcon], ['Sun Path', SunIcon], ['Shadows', ShadowIcon],
    ['Crop View', CropIcon], ['Show Crop Region', CropRegionIcon], ['Hide/Isolate', GlassesIcon], ['Reveal Hidden', BulbIcon],
];

const Elevation = () => (
    <svg viewBox="301 240 1183 788" fill="none" stroke="#111" strokeWidth="1.300" role="img" aria-label="Left elevation of the refrigerator">
        <path d="M752.500 287.500h299v684h-299zM768.500 287.500v684M1033.500 287.500v9M1033.500 376.500v595" />
        <path d="M768.500 300.500h265M1033.500 296.500v80M1033.500 296.500h19M1033.500 336.500h18M1033.500 376.500h19" stroke="#8a8a8a" />
        <path d="M1052.500 296.500v80" />
        <path d="M1050.500 346.500h3v20h-3z" fill="#333" stroke="#666" />
        <path d="M1033 390h18" strokeWidth="2" />
        <path d="M1033.500 448h18M1033.500 906.500h18M1040.500 448.500v457M1046.500 448.500v457M1040.500 903.500h6" />
        <path d="M1049.500 448.500v457" stroke="#aaa" strokeWidth="2" />
        <path d="M1033.500 598.500h19v84h-19" stroke="#777" />
        {shelves.map((y) => (
            <path key={y} d={`M768.500 ${y - 0.5}h259v36h-259M768.500 ${y + 18.5}h259`} />
        ))}
        <path d="M878.500 500.500h11v12h-11z" stroke="#777" />
        <g stroke="#555" strokeWidth="1">
            <circle cx="788" cy="979" r="13.500" />
            <circle cx="1016.500" cy="979" r="13.500" />
        </g>
        <path d="M393 991.500h1055" strokeDasharray="53 46 5 39.300" />
        <path d="M357 991.500h1126" stroke={GREEN} strokeWidth="1.500" strokeDasharray="11 11.300" />
        <path d="M938.500 424v603" stroke={GREEN} strokeWidth="1.500" strokeDasharray="10 12.200" />
    </svg>
);

/* the blue arc is the top of the start orb behind the bar */
const Status = styled.footer`
    height: 29px;
    padding: 6px 3px 3px;
    background:
        radial-gradient(circle at 34px 47px, #bfd9ea 20px, #35709a 21px, transparent 23px),
        linear-gradient(#e6e6e6, #c3c3c3);
`;

const ViewPane = () => (
    <View>
        <Canvas>
            <Elevation />
            <WindowButtons>
                <WindowButton aria-label="Minimize"><Glyph w={16}><path d="M1 9.500h14v4H1z" /></Glyph></WindowButton>
                <WindowButton aria-label="Restore">
                    <Glyph w={16}><path d="M4.500 4V1.500h9v9H12M2.500 4.500h9v9h-9zM6.500 7.500h2v3h-2z" strokeWidth="1.300" /></Glyph>
                </WindowButton>
                <WindowButton aria-label="Close">
                    <Glyph w={16}><path d="M2 2.500h4l2 3 2-3h4v2L10.500 8l3.500 3.500v2h-4l-2-3-2 3H2v-2L5.500 8 2 4.500z" strokeWidth="1.200" /></Glyph>
                </WindowButton>
            </WindowButtons>
        </Canvas>
        <ScrollBar $vertical>
            <ScrollArrow aria-label="Scroll up"><Glyph w={8} h={4} stroke="none"><path d="M0 4h8L4 0z" fill="#333" /></Glyph></ScrollArrow>
            <Thumb />
            <ScrollArrow aria-label="Scroll down"><Caret w={8} color="#333" /></ScrollArrow>
        </ScrollBar>
        <ViewBar>
            <ScaleButton>1/2" = 1'-0"</ScaleButton>
            {viewTools.map(([name, Icon]) => <ViewTool key={name} aria-label={name}><Icon /></ViewTool>)}
            <ScrollBar>
                <ScrollArrow aria-label="Scroll left"><Glyph w={5} h={8} stroke="none"><path d="M5 0v8L0 4z" fill="#333" /></Glyph></ScrollArrow>
                <Thumb />
                <ScrollArrow aria-label="Scroll right"><Glyph w={5} h={8} stroke="none"><path d="M0 0v8l5-4z" fill="#333" /></Glyph></ScrollArrow>
            </ScrollBar>
        </ViewBar>
        <Grip>
            <Glyph w={14} stroke="none"><path d="M9 2h2v2H9zM9 6h2v2H9zM5 6h2v2H5zM9 10h2v2H9zM5 10h2v2H5zM1 10h2v2H1z" fill="#bbb" /></Glyph>
        </Grip>
    </View>
);

const tabs = ['Home', 'Insert', 'Annotate', 'View', 'Manage', 'Modify', 'Add-Ins'];

export default function App() {
    return (
        <Shell>
            <GlobalStyle />
            <Header>
                <AppButton aria-label="Application menu"><LogoIcon /></AppButton>
                <TitleBar>
                    <Title>Autodesk Revit Architecture 2011 - [Sanyo - MBR704GR - Blood Bank Refrigerator - Elevation: Left]</Title>
                    <InfoCenter>
                        <InfoToggle type="button" aria-label="Collapse search">
                            <Glyph w={5} h={8} stroke="none"><path d="M0 0v8l5-4z" fill="#000" /></Glyph>
                        </InfoToggle>
                        <Search aria-label="Search" placeholder="Type a keyword or phrase" />
                        <InfoButton type="button" aria-label="Find"><BinocularsIcon /></InfoButton>
                        <InfoButton type="button" $w={8} aria-label="Search options"><Caret color="#333" /></InfoButton>
                        <InfoButton type="button" $w={32} aria-label="Subscription"><KeyIcon /></InfoButton>
                    </InfoCenter>
                </TitleBar>
                <TabBar>
                    {tabs.map((t) => <Tab key={t} $active={t === 'Modify'}>{t}</Tab>)}
                    <TabTools>
                        <Pill aria-label="Minimize ribbon"><Glyph w={6} h={4} stroke="none"><path d="M0 4h6L3 0z" fill="#333" /></Glyph></Pill>
                        <Caret color="#e6e6e6" />
                    </TabTools>
                </TabBar>
            </Header>
            <RibbonBar />
            <QuickAccess />
            <OptionsBar />
            <Main>
                <Browser>
                    <BrowserHead>
                        <BrowserTitle>Sanyo - MBR704GR - Blood Bank Refri...</BrowserTitle>
                        <CloseButton aria-label="Close browser">
                            <Glyph w={9}><path d="M1.500 1.500l6 6M7.500 1.500l-6 6" strokeWidth="2" /></Glyph>
                        </CloseButton>
                    </BrowserHead>
                    <TreePane>
                        <Nodes nodes={views} depth={0} />
                    </TreePane>
                </Browser>
                <ViewPane />
            </Main>
            <Status>Click to select, TAB for alternates, CTRL adds, SHIFT unselects.</Status>
        </Shell>
    );
}
